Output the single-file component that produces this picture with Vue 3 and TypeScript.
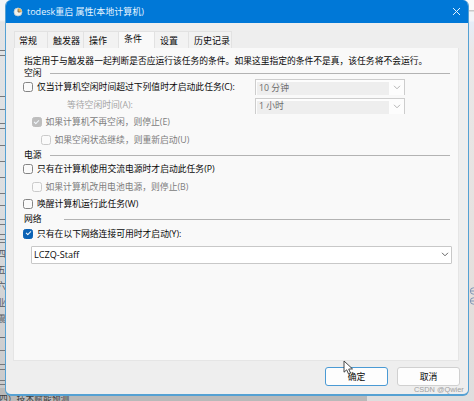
<script setup lang="ts">
import { ref } from 'vue'

const tabs = [
  { name: '常规', width: 34 },
  { name: '触发器', width: 36 },
  { name: '操作', width: 35 },
  { name: '条件', width: 36 },
  { name: '设置', width: 34 },
  { name: '历史记录', width: 43 },
]
const active = ref('条件')

const idle = ref(false)
const stopIdle = ref(true)
const restartIdle = ref(false)
const acPower = ref(false)
const stopBattery = ref(false)
const wake = ref(false)
const network = ref(true)

// pieces of the document that stick out left of the dialog
const edgeLines = [50, 55, 96, 109, 123, 128, 145, 161, 177, 193, 205, 219, 224, 234, 239, 242, 350, 364, 369, 380, 384]
const edgeText = [
  { y: 248, text: '四' },
  { y: 264, text: '五' },
  { y: 280, text: '六' },
  { y: 297, text: '业' },
  { y: 313, text: '震' },
  { y: 332, text: '一' },
]
</script>

<template>
  <div class="desktop">
    <div class="edge-left">
      <i v-for="y in edgeLines" :key="y" class="edge-line" :style="{ top: y + 'px' }" />
      <span v-for="t in edgeText" :key="t.y" class="edge-char" :style="{ top: t.y + 'px' }">{{ t.text }}</span>
    </div>
    <div class="edge-right">
      <svg class="rings" width="5" height="20" viewBox="0 0 5 20">
        <circle cx="4.5" cy="5" r="3.2" />
        <circle cx="4.5" cy="15" r="3.2" />
        <path d="M2 5h3M2 15h3" />
      </svg>
    </div>
    <div class="edge-bottom"><span>四）技术赋能预测</span></div>

    <div class="dialog">
      <header class="titlebar">
        <svg class="clock" width="10" height="10" viewBox="0 0 10 10">
          <circle cx="5" cy="5" r="4" fill="#f2f1e9" stroke="#b9c9d4" stroke-width=".8" />
          <path d="M5 5V1.2A3.8 3.8 0 0 1 8.8 5z" fill="#e9b55b" />
          <path d="M5 2.2V5h2.5" fill="none" stroke="#665b4c" stroke-width=".8" />
        </svg>
        <span class="title">todesk重启 属性(本地计算机)</span>
        <svg class="close" width="9" height="9" viewBox="0 0 9 9">
          <path d="M1 1l7 7M8 1L1 8" fill="none" stroke="#e4f3ff" stroke-width="1" />
        </svg>
      </header>

      <nav class="tabs">
        <div
          v-for="t in tabs"
          :key="t.name"
          class="tab"
          :class="{ active: t.name === active }"
          :style="{ width: t.width + 'px' }"
          @click="active = t.name"
        >
          {{ t.name }}
        </div>
      </nav>

      <main class="panel">
        <p class="desc">指定用于与触发器一起判断是否应运行该任务的条件。如果这里指定的条件不是真，该任务将不会运行。</p>

        <div class="group"><span>空闲</span><hr /></div>
        <div class="row idle">
          <label class="check"><input v-model="idle" type="checkbox" /><i class="box" />仅当计算机空闲时间超过下列值时才启动此任务(C):</label>
          <div class="combo off">
            <span>10 分钟</span>
            <svg width="8" height="5" viewBox="0 0 8 5"><path d="M1 .8l3 3 3-3" /></svg>
          </div>
        </div>
        <div class="row wait">
          <span class="wait-label">等待空闲时间(A):</span>
          <div class="combo off">
            <span>1 小时</span>
            <svg width="8" height="5" viewBox="0 0 8 5"><path d="M1 .8l3 3 3-3" /></svg>
          </div>
        </div>
        <label class="row check sub off"><input v-model="stopIdle" type="checkbox" disabled /><i class="box" />如果计算机不再空闲，则停止(E)</label>
        <label class="row check subsub off"><input v-model="restartIdle" type="checkbox" disabled /><i class="box" />如果空闲状态继续，则重新启动(U)</label>

        <div class="group"><span>电源</span><hr /></div>
        <label class="row check"><input v-model="acPower" type="checkbox" /><i class="box" />只有在计算机使用交流电源时才启动此任务(P)</label>
        <label class="row check sub off"><input v-model="stopBattery" type="checkbox" disabled /><i class="box" />如果计算机改用电池电源，则停止(B)</label>
        <label class="row check"><input v-model="wake" type="checkbox" /><i class="box" />唤醒计算机运行此任务(W)</label>

        <div class="group net"><span>网络</span><hr /></div>
        <label class="row check"><input v-model="network" type="checkbox" /><i class="box" />只有在以下网络连接可用时才启动(Y):</label>
        <div class="combo wide">
          <span>LCZQ-Staff</span>
          <svg width="8" height="5" viewBox="0 0 8 5"><path d="M1 .8l3 3 3-3" /></svg>
        </div>
      </main>

      <footer class="actions">
        <button class="btn primary">确定</button>
        <button class="btn">取消</button>
      </footer>
    </div>

    <svg class="cursor" width="11" height="16" viewBox="0 0 11 16">
      <path d="M1 1v11.2l2.7-2.4 1.9 4.3 2-.9-1.9-4.1 3.8-.2z" fill="#fff" stroke="#333" stroke-width=".9" />
    </svg>
    <span class="watermark">CSDN @Qwier</span>
  </div>
</template>

<style>
body {
  margin: 0;
  overflow: hidden;
}
</style>

<style scoped>
.desktop {
  position: relative;
  width: 474px;
  height: 401px;
  overflow: hidden;
  background: #dedede;
  font-family: 'Open Sans', 'Noto Sans CJK SC', sans-serif;
  font-size: 8.8px;
  line-height: 12px;
  color: #080808;
  white-space: nowrap;
}

.edge-left {
  position: absolute;
  left: 0;
  top: 0;
  width: 12px;
  height: 401px;
  background: linear-gradient(#f3f5f7 20px, #e2e4e6 22px, #dcdee0 200px, #c9c9ca);
}

.edge-line {
  position: absolute;
  left: 0;
  width: 6px;
  height: 1px;
  background: #77797c;
}

.edge-char {
  position: absolute;
  left: -3px;
  color: #55585c;
}

.edge-right {
  position: absolute;
  right: 0;
  top: 0;
  width: 12px;
  height: 401px;
  background: linear-gradient(#fafafa 10px, #c9c9c9 10px, #c9c9c9 11px, #f2f4f7 12px, #f2f5fa 21px, #e5edf8 22px, #eae8e8 50px, #e4dfdc 300px, #dedede);
}

.rings {
  position: absolute;
  right: 0;
  top: 286px;
  fill: none;
  stroke: #8195b5;
}

.edge-bottom {
  position: absolute;
  left: 0;
  top: 388px;
  width: 367px;
  height: 13px;
  background: #b9b9b9;
  color: #3c3c3c;
}

.edge-bottom span {
  position: relative;
  left: -1px;
  top: 5px;
}

.dialog {
  position: absolute;
  left: 5px;
  top: 0;
  display: flex;
  flex-direction: column;
  box-sizing: border-box;
  width: 464px;
  height: 396px;
  border: 1px solid #55a1d3;
  border-top: 0;
  border-bottom-width: 2px;
  border-radius: 6px;
  background: #eee;
  overflow: hidden;
}

.titlebar {
  display: flex;
  align-items: center;
  box-sizing: border-box;
  flex: none;
  height: 23px;
  margin: 0 -1px;
  padding: 0 8px;
  background: #0078d7;
  color: #e8f5ff;
}

.title {
  flex: 1;
  margin-left: 4px;
  font-size: 9px;
}

.tabs {
  display: flex;
  flex: none;
  height: 17px;
  margin: 8px 0 0 8px;
}

.tab {
  box-sizing: border-box;
  height: 17px;
  padding: 3px 0 0 5px;
  border: 1px solid #e2e2e2;
  border-width: 1px 1px 0 0;
  background: #f2f2f2;
  font-size: 9px;
}

.tab:first-child {
  padding-left: 4px;
  border-left-width: 1px;
}

.tab.active {
  padding-top: 1px;
  background: #f9f9f9;
}

.panel {
  display: flex;
  flex-direction: column;
  box-sizing: border-box;
  flex: none;
  width: 446px;
  height: 313px;
  margin-left: 7px;
  padding: 7px 8px 0 9px;
  background: #f9f9f9;
  border: 1px solid #e5e5e5;
  border-top: 0;
}

.desc {
  margin: 0 0 0 1px;
  font-size: 8.78px;
}

.group {
  display: flex;
  align-items: center;
  gap: 8px;
  height: 12px;
  margin-left: 1px;
}

.group.net {
  gap: 22px;
}

.group hr {
  flex: 1;
  height: 1px;
  margin: 1px 0 0;
  border: 0;
  background: #b3b3b3;
}

.row {
  display: flex;
  align-items: center;
  height: 17.5px;
}

.row.idle {
  height: 18.5px;
  justify-content: space-between;
  align-items: flex-start;
  padding-right: 45px;
}

.row.idle .check {
  height: 16px;
}

.row.wait {
  height: 16px;
  justify-content: space-between;
  align-items: flex-start;
  padding: 0 45px 0 44px;
  color: #a4a4a4;
}

.wait-label {
  padding-top: 1px;
}

.check {
  display: flex;
  align-items: center;
}

.check input {
  display: none;
}

.box {
  position: relative;
  box-sizing: border-box;
  flex: none;
  width: 10px;
  height: 10px;
  margin-right: 4px;
  border: 1px solid #848484;
  border-radius: 2.5px;
  background: #fafafa;
}

.check.off {
  color: #7c7c7c;
}

.off .box {
  border-color: #cacaca;
}

.check input:checked + .box {
  border-color: #0b62b5;
  background: #0b62b5;
}

.check.off input:checked + .box {
  border-color: #bebebe;
  background: #bebebe;
}

.check input:checked + .box::after {
  content: '';
  position: absolute;
  left: 1.5px;
  top: 1.5px;
  width: 4px;
  height: 2px;
  border: solid #f1f7fc;
  border-width: 0 0 1px 1px;
  transform: rotate(-45deg);
}

.sub {
  padding-left: 8.5px;
}

.subsub {
  padding-left: 17.5px;
}

.combo {
  display: flex;
  align-items: center;
  justify-content: space-between;
  box-sizing: border-box;
  width: 150px;
  height: 16px;
  padding: 0 3px;
  border: 1px solid #cdcdcd;
  background: #fff;
}

.combo svg {
  fill: none;
  stroke: #666;
  stroke-width: 1;
}

.combo.off {
  border-bottom: 0;
  background: linear-gradient(#eee, #eee) 1px 2px / 132px 13px no-repeat #fdfdfd;
  color: #6c6c6c;
}

.combo.off svg {
  stroke: #b5b5b5;
}

.combo.wide {
  width: 421px;
  height: 18px;
  margin: 3px 0 0 8px;
  padding: 0 2px;
  border-color: #c8c8c8;
  border-radius: 1px;
  font-size: 9.1px;
}

.actions {
  display: flex;
  justify-content: flex-end;
  gap: 9px;
  padding: 6px 8px 0 0;
}

.btn {
  box-sizing: border-box;
  width: 63px;
  height: 19px;
  padding: 0;
  border: 1px solid #d0d0d0;
  border-radius: 3px;
  background: #fdfdfd;
  color: #080808;
  font: inherit;
}

.btn.primary {
  border-color: #4a9ad4;
}

.cursor {
  position: absolute;
  left: 343px;
  top: 360px;
}

.watermark {
  position: absolute;
  left: 414px;
  top: 384px;
  font-family: 'Liberation Sans', sans-serif;
  font-size: 7.4px;
  color: #a0a0a0;
}
</style>
